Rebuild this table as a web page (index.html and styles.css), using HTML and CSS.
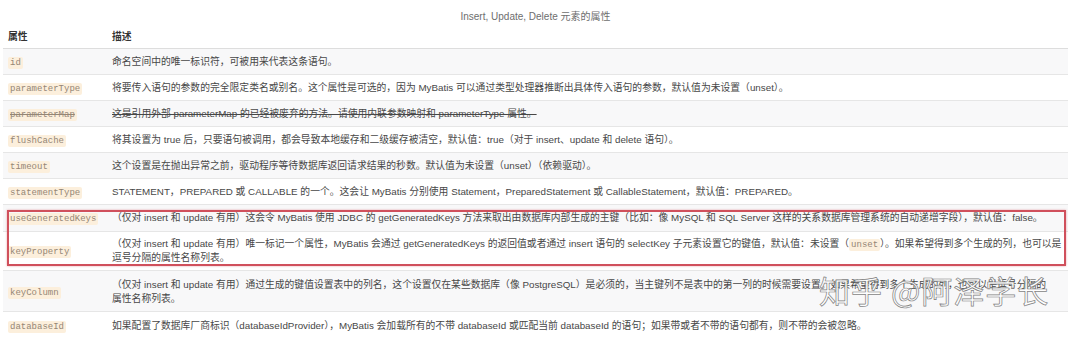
FILE: index.html
```html
<!DOCTYPE html>
<html lang="zh-CN">
<head>
<meta charset="utf-8">
<title>Insert, Update, Delete 元素的属性</title>
<link rel="stylesheet" href="styles.css">
</head>
<body>
<div class="page">
  <div class="table">
    <div class="caption">Insert, Update, Delete 元素的属性</div>
    <div class="row head">
      <div class="c1">属性</div>
      <div class="c2">描述</div>
    </div>
    <div class="row odd">
      <div class="c1"><code>id</code></div>
      <div class="c2">命名空间中的唯一标识符，可被用来代表这条语句。</div>
    </div>
    <div class="row">
      <div class="c1"><code>parameterType</code></div>
      <div class="c2">将要传入语句的参数的完全限定类名或别名。这个属性是可选的，因为 MyBatis 可以通过类型处理器推断出具体传入语句的参数，默认值为未设置（unset）。</div>
    </div>
    <div class="row odd">
      <div class="c1"><code class="del">parameterMap</code></div>
      <div class="c2"><span class="del">这是引用外部 parameterMap 的已经被废弃的方法。请使用内联参数映射和 parameterType 属性。</span></div>
    </div>
    <div class="row">
      <div class="c1"><code>flushCache</code></div>
      <div class="c2">将其设置为 true 后，只要语句被调用，都会导致本地缓存和二级缓存被清空，默认值：true（对于 insert、update 和 delete 语句）。</div>
    </div>
    <div class="row odd">
      <div class="c1"><code>timeout</code></div>
      <div class="c2">这个设置是在抛出异常之前，驱动程序等待数据库返回请求结果的秒数。默认值为未设置（unset）（依赖驱动）。</div>
    </div>
    <div class="row">
      <div class="c1"><code>statementType</code></div>
      <div class="c2">STATEMENT，PREPARED 或 CALLABLE 的一个。这会让 MyBatis 分别使用 Statement，PreparedStatement 或 CallableStatement，默认值：PREPARED。</div>
    </div>
    <div class="group">
      <div class="row odd r-ugk">
        <div class="c1"><code>useGeneratedKeys</code></div>
        <div class="c2">（仅对 insert 和 update 有用）这会令 MyBatis 使用 JDBC 的 getGeneratedKeys 方法来取出由数据库内部生成的主键（比如：像 MySQL 和 SQL Server 这样的关系数据库管理系统的自动递增字段），默认值：false。</div>
      </div>
      <div class="row r-kp">
        <div class="c1"><code>keyProperty</code></div>
        <div class="c2">（仅对 insert 和 update 有用）唯一标记一个属性，MyBatis 会通过 getGeneratedKeys 的返回值或者通过 insert 语句的 selectKey 子元素设置它的键值，默认值：未设置（<code>unset</code>）。如果希望得到多个生成的列，也可以是<br>逗号分隔的属性名称列表。</div>
      </div>
    </div>
    <div class="row odd r-kc">
      <div class="c1"><code>keyColumn</code></div>
      <div class="c2">（仅对 insert 和 update 有用）通过生成的键值设置表中的列名，这个设置仅在某些数据库（像 PostgreSQL）是必须的，当主键列不是表中的第一列的时候需要设置。如果希望得到多个生成的列，也可以是逗号分隔的<br>属性名称列表。</div>
      <div class="watermark">知乎 @阿泽学长</div>
    </div>
    <div class="row r-db">
      <div class="c1"><code>databaseId</code></div>
      <div class="c2">如果配置了数据库厂商标识（databaseIdProvider），MyBatis 会加载所有的不带 databaseId 或匹配当前 databaseId 的语句；如果带或者不带的语句都有，则不带的会被忽略。</div>
    </div>
  </div>
</div>
</body>
</html>
```
FILE: styles.css
```css
html, body {
  margin: 0;
  padding: 0;
  background: #ffffff;
}

body {
  font-family: "Liberation Sans", Arial, "Noto Sans CJK SC", sans-serif;
  font-size: 9.8px;
  color: #474747;
}

.page {
  width: 1080px;
  height: 342px;
  overflow: hidden;
}

.table {
  margin-left: 3px;
  width: 1065px;
  display: flex;
  flex-direction: column;
}

.caption {
  height: 24px;
  line-height: 14px;
  padding-top: 10px;
  box-sizing: border-box;
  text-align: center;
  color: #6e6e6e;
  font-size: 10px;
}

.row {
  display: grid;
  grid-template-columns: 109px 1fr;
  align-items: center;
  height: 26px;
  box-sizing: border-box;
  border-bottom: 1px solid #e6e6e6;
  background: #ffffff;
  position: relative;
}

.c1, .c2 {
  line-height: 14px;
  max-height: 28px;
}

.row.head {
  height: 25px;
  padding-top: 1px;
  font-weight: bold;
  color: #333333;
  border-bottom: 1px solid #dddddd;
}

.row.odd {
  background: #f8f8f9;
}

.c1 {
  padding-left: 5px;
}

.c2 {
  white-space: nowrap;
}

code {
  font-family: "Liberation Mono", "Courier New", monospace;
  font-size: 9px;
  line-height: 12px;
  color: #958675;
  background: #fcefdc;
  padding: 1px 2px;
  border-radius: 2px;
}

.del {
  text-decoration: line-through;
}

.group {
  position: relative;
}

.group::after {
  content: "";
  position: absolute;
  left: 4px;
  right: 2px;
  top: 5px;
  height: 56px;
  border: 2px solid #d0505c;
  box-sizing: border-box;
  box-shadow: 0 0 2px rgba(200, 60, 70, 0.45);
  pointer-events: none;
}

.row.r-ugk {
  height: 27px;
}

.row.r-kp {
  height: 39px;
  padding-bottom: 1px;
}

.row.r-kc {
  height: 41px;
  padding-top: 2px;
}

.row.r-db {
  height: 28px;
  border-bottom: none;
}

.watermark {
  position: absolute;
  left: 816px;
  top: 3px;
  font-family: "Noto Sans CJK SC", sans-serif;
  font-size: 31px;
  line-height: 32px;
  color: #ffffff;
  -webkit-text-stroke: 0.7px #7a7a7a;
  letter-spacing: 1px;
  white-space: nowrap;
  opacity: 0.95;
}
```
